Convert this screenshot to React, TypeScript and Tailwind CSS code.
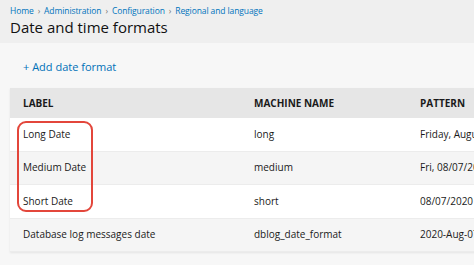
const rows = [
  { label: 'Long Date', machine: 'long', pattern: 'Friday, August 7, 2020 - 10:15' },
  { label: 'Medium Date', machine: 'medium', pattern: 'Fri, 08/07/2020 - 10:15' },
  { label: 'Short Date', machine: 'short', pattern: '08/07/2020 - 10:15' },
  { label: 'Database log messages date', machine: 'dblog_date_format', pattern: '2020-Aug-07 10:15:00' },
];

export default function App() {
  return (
    <div className="h-[265px] w-[474px] overflow-hidden bg-[#f7f7f7] font-['Open_Sans',sans-serif] text-[#1a1a1a]">
      <header className="h-[43px] bg-[#efefef] px-[10px] pt-[5px]">
        <nav className="flex h-[12px] items-center gap-[4px] text-[8.5px] leading-[12px] tracking-[-0.1px] text-[#0074bd]">
          <span>Home</span>
          <span className="text-[#777]">›</span>
          <span>Administration</span>
          <span className="text-[#777]">›</span>
          <span>Configuration</span>
          <span className="text-[#777]">›</span>
          <span>Regional and language</span>
        </nav>
        <h1 className="text-[15px] leading-[20px] text-[#111]">Date and time formats</h1>
      </header>

      <div className="pl-[10px] pt-[15px]">
        <a className="ml-[13px] block text-[11px] leading-[18px] text-[#0071b8]">+ Add date format</a>

        <div className="relative mt-[12px] w-[480px] bg-white shadow-[0_1px_2px_rgba(0,0,0,0.08)]">
          <div className="flex h-[30px] items-center bg-[#e6e6e6] text-[10px] font-bold uppercase text-[#1a1a1a]">
            <div className="w-[244px] pl-[13px]">Label</div>
            <div className="w-[166px]">Machine name</div>
            <div className="flex-1">Pattern</div>
          </div>
          {rows.map((r, i) => (
            <div
              key={r.machine}
              className={`flex h-[33.5px] items-center whitespace-nowrap border-b border-[#ececec] text-[10px] ${i % 2 ? 'bg-[#f5f5f5]' : 'bg-white'}`}
            >
              <div className="w-[244px] pl-[13px]">{r.label}</div>
              <div className="w-[166px]">{r.machine}</div>
              <div className="flex-1 overflow-hidden">{r.pattern}</div>
            </div>
          ))}
          <div className="absolute left-[7px] top-[33px] h-[91px] w-[76px] rounded-[9px] border-2 border-[#e3463b]" />
        </div>
      </div>
    </div>
  );
}
